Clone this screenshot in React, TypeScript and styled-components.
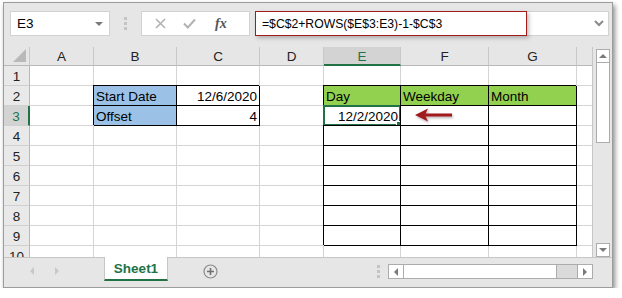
import { Fragment } from "react"
import styled, { createGlobalStyle } from "styled-components"

const GlobalStyle = createGlobalStyle`
  html, body {
    margin: 0;
    background: #ffffff;
  }
  body {
    font-family: "Liberation Sans", Arial, sans-serif;
    font-size: 13.5px;
    color: #000;
  }
`

const Window = styled.div`
  margin: 2px 0 0 3px;
  width: 610px;
  height: 286px;
  box-sizing: border-box;
  border: 1px solid #9c9c9c;
  box-shadow: 2px 3px 5px rgba(0, 0, 0, 0.45);
  background: #e6e6e6;
  display: flex;
  flex-direction: column;
  overflow: hidden;
`

const FormulaBar = styled.div`
  height: 44px;
  flex: none;
  display: flex;
  align-items: flex-start;
  padding: 8px 3px 0 6px;
  box-sizing: border-box;
`

const NameBox = styled.div`
  width: 100px;
  height: 25px;
  box-sizing: border-box;
  background: #fff;
  border: 1px solid #d2d2d2;
  display: flex;
  align-items: center;
  justify-content: space-between;
  padding: 0 6px 0 6px;
`

const DownTriangle = styled.span`
  width: 0;
  height: 0;
  border-left: 4px solid transparent;
  border-right: 4px solid transparent;
  border-top: 4px solid #7a7a7a;
`

const Grip = styled.div<{ $h?: number; $top?: number }>`
  width: ${p => (p.$h ? "auto" : "31px")};
  height: ${p => p.$h || 25}px;
  margin-top: ${p => p.$top || 0}px;
  display: flex;
  align-items: center;
  justify-content: center;
`

const FxBox = styled.div`
  width: 109px;
  height: 25px;
  box-sizing: border-box;
  background: #fff;
  border: 1px solid #d2d2d2;
  display: flex;
  align-items: center;
  padding-left: 13px;
  gap: 17px;
`

const FxLabel = styled.span`
  font-family: "Liberation Serif", "Times New Roman", serif;
  font-style: italic;
  font-weight: bold;
  font-size: 14px;
  color: #555;
  margin-left: 2px;
`

const FormulaField = styled.div`
  flex: 1;
  margin-left: 5px;
  height: 25px;
  box-sizing: border-box;
  background: #fff;
  border: 1px solid #d2d2d2;
  display: flex;
  align-items: stretch;
`

const ActiveInput = styled.div`
  width: 272px;
  margin: -1px 0 -1px -1px;
  box-sizing: border-box;
  border: 1px solid #a11d1d;
  box-shadow: 2px 2px 4px rgba(0, 0, 0, 0.25);
  display: flex;
  align-items: center;
  padding-left: 6px;
  font-size: 12.2px;
  white-space: nowrap;
`

const FieldEnd = styled.div`
  flex: 1;
  display: flex;
  align-items: center;
  justify-content: flex-end;
  padding-right: 4px;
`

const Body = styled.div`
  height: 210px;
  flex: none;
  display: flex;
`

const Sheet = styled.div`
  display: grid;
  grid-template-columns: 26px 64px 83px 83px 64px 77px 88px 88px 16px;
  grid-template-rows: 19px;
  grid-auto-rows: 20px;
  width: 589px;
  height: 210px;
  overflow: hidden;
  background: #fff;
  border-right: 1px solid #c6c6c6;
  box-sizing: border-box;
`

const ColHead = styled.div<{ $active?: boolean }>`
  box-sizing: border-box;
  background: ${p => (p.$active ? "#d3d3d3" : "#e6e6e6")};
  color: ${p => (p.$active ? "#217346" : "#222")};
  border-right: 1px solid #c8c8c8;
  border-bottom: ${p => (p.$active ? "2px solid #217346" : "1px solid #b8b8b8")};
  display: flex;
  align-items: center;
  justify-content: center;
  padding-top: 1px;
`

const Corner = styled.div`
  box-sizing: border-box;
  background: #e6e6e6;
  border-right: 1px solid #c8c8c8;
  border-bottom: 1px solid #b8b8b8;
  position: relative;

  &::after {
    content: "";
    position: absolute;
    right: 3px;
    bottom: 3px;
    width: 0;
    height: 0;
    border-left: 13px solid transparent;
    border-bottom: 13px solid #b9b9b9;
  }
`

const RowHead = styled.div<{ $active?: boolean }>`
  box-sizing: border-box;
  background: ${p => (p.$active ? "#d3d3d3" : "#e9e9e9")};
  color: ${p => (p.$active ? "#217346" : "#222")};
  border-right: ${p => (p.$active ? "2px solid #217346" : "1px solid #b8b8b8")};
  border-bottom: 1px solid #d0d0d0;
  display: flex;
  align-items: center;
  justify-content: center;
  padding-top: 1px;
`

const Cell = styled.div<{ $fill?: string; $right?: boolean; $box?: boolean }>`
  box-sizing: border-box;
  position: relative;
  background: ${p => p.$fill || "#fff"};
  border-right: 1px solid ${p => (p.$box ? "#000" : "#d4d4d4")};
  border-bottom: 1px solid ${p => (p.$box ? "#000" : "#d4d4d4")};
  box-shadow: ${p => (p.$box ? "-1px -1px 0 0 #000" : "none")};
  display: flex;
  align-items: flex-end;
  justify-content: ${p => (p.$right ? "flex-end" : "flex-start")};
  padding: 0 2px 1px 2px;
  white-space: nowrap;
  overflow: visible;
`

const Selection = styled.div`
  position: absolute;
  left: -1px;
  top: -1px;
  right: -1px;
  bottom: -1px;
  border: 2px solid #217346;
  pointer-events: none;

  &::after {
    content: "";
    position: absolute;
    right: -4px;
    bottom: -4px;
    width: 5px;
    height: 5px;
    background: #217346;
    border: 1px solid #fff;
  }
`

const ArrowWrap = styled.div`
  align-self: center;
  margin: 2px 0 0 12px;
  display: flex;
`

const VScroll = styled.div`
  width: 19px;
  flex: none;
  display: flex;
  flex-direction: column;
  padding: 2px 2px 0 3px;
  box-sizing: border-box;
`

const ScrollButton = styled.div`
  width: 14px;
  height: 14px;
  box-sizing: border-box;
  background: #fff;
  border: 1px solid #acacac;
  display: flex;
  align-items: center;
  justify-content: center;
  flex: none;
`

const VThumb = styled.div`
  height: 80px;
  width: 14px;
  box-sizing: border-box;
  background: #fff;
  border: 1px solid #acacac;
  border-top: none;
`

const Spacer = styled.div`
  flex: 1;
`

const TabBar = styled.div`
  flex: 1;
  display: flex;
  align-items: flex-start;
  border-top: 1px solid #c6c6c6;
`

const SheetNav = styled.div`
  width: 100px;
  height: 26px;
  display: flex;
  align-items: center;
  padding-left: 26px;
  gap: 21px;
  box-sizing: border-box;
`

const Tab = styled.div`
  width: 64px;
  height: 24px;
  margin-top: -1px;
  box-sizing: border-box;
  background: #fff;
  border-left: 1px solid #c6c6c6;
  border-right: 1px solid #c6c6c6;
  border-bottom: 2px solid #217346;
  color: #217346;
  font-weight: bold;
  display: flex;
  align-items: center;
  justify-content: center;
  padding-top: 1px;
`

const AddSheet = styled.div`
  margin: 6px 0 0 35px;
  display: flex;
`

const HScroll = styled.div`
  width: 205px;
  height: 15px;
  margin: 6px 19px 0 8px;
  box-sizing: border-box;
  border: 1px solid #acacac;
  background: #dadada;
  display: flex;
`

const HButton = styled.div<{ $side: "left" | "right" }>`
  width: 14px;
  background: #fff;
  ${p => (p.$side === "left" ? "border-right: 1px solid #acacac;" : "border-left: 1px solid #acacac;")}
  display: flex;
  align-items: center;
  justify-content: center;
`

const HThumb = styled.div`
  width: 152px;
  background: #fff;
  border-right: 1px solid #acacac;
`

const HTrack = styled.div`
  flex: 1;
`

const Dots = ({ color = "#b4b4b4" }: { color?: string }) => (
  <svg width="3" height="13" viewBox="0 0 3 13">
    <rect x="0" y="0" width="3" height="3" fill={color} />
    <rect x="0" y="5" width="3" height="3" fill={color} />
    <rect x="0" y="10" width="3" height="3" fill={color} />
  </svg>
)

const Tri = ({ dir, color = "#7a7a7a", size = 4 }: { dir: "up" | "down" | "left" | "right"; color?: string; size?: number }) => {
  const s = size
  const pts = {
    up: `0,${s} ${s},0 ${2 * s},${s}`,
    down: `0,0 ${2 * s},0 ${s},${s}`,
    left: `${s},0 ${s},${2 * s} 0,${s}`,
    right: `0,0 0,${2 * s} ${s},${s}`,
  }[dir]
  const w = dir === "up" || dir === "down" ? 2 * s : s
  const h = dir === "up" || dir === "down" ? s : 2 * s
  return (
    <svg width={w} height={h} viewBox={`0 0 ${w} ${h}`}>
      <polygon points={pts} fill={color} />
    </svg>
  )
}

const RedArrow = () => (
  <svg width="40" height="18" viewBox="0 0 40 18">
    <defs>
      <filter id="sh" x="-20%" y="-40%" width="140%" height="180%">
        <feDropShadow dx="1" dy="1.5" stdDeviation="1" floodColor="#000" floodOpacity="0.3" />
      </filter>
    </defs>
    <g filter="url(#sh)" fill="#a01b1f">
      <rect x="9" y="6.5" width="28" height="3" />
      <polygon points="0,8 13,1.5 10,8 13,14.5" />
    </g>
  </svg>
)

const columns = ["A", "B", "C", "D", "E", "F", "G", ""]

type CellData = { text?: string; fill?: string; right?: boolean; box?: boolean; selected?: boolean; arrow?: boolean }

const BLUE = "#9bc2e6"
const GREEN = "#92d050"

const sheet: Record<number, Record<string, CellData>> = {
  2: {
    B: { text: "Start Date", fill: BLUE, box: true },
    C: { text: "12/6/2020", right: true, box: true },
    E: { text: "Day", fill: GREEN, box: true },
    F: { text: "Weekday", fill: GREEN, box: true },
    G: { text: "Month", fill: GREEN, box: true },
  },
  3: {
    B: { text: "Offset", fill: BLUE, box: true },
    C: { text: "4", right: true, box: true },
    E: { text: "12/2/2020", right: true, box: true, selected: true },
    F: { box: true, arrow: true },
    G: { box: true },
  },
}

// empty bordered rows of the result table
for (let r = 4; r <= 9; r++) {
  sheet[r] = { E: { box: true }, F: { box: true }, G: { box: true } }
}

const rows = Array.from({ length: 10 }, (_, i) => i + 1)

export default function App() {
  return (
    <Fragment>
      <GlobalStyle />
      <Window>
        <FormulaBar>
          <NameBox>
            <span>E3</span>
            <DownTriangle />
          </NameBox>
          <Grip>
            <Dots color="#c4c4c4" />
          </Grip>
          <FxBox>
            <svg width="11" height="11" viewBox="0 0 11 11">
              <path d="M1 1 L10 10 M10 1 L1 10" stroke="#b2b2b2" strokeWidth="1.6" />
            </svg>
            <svg width="13" height="11" viewBox="0 0 13 11">
              <path d="M1 5.5 L4.8 9.5 L12 1.5" stroke="#b2b2b2" strokeWidth="2" fill="none" />
            </svg>
            <FxLabel>fx</FxLabel>
          </FxBox>
          <FormulaField>
            <ActiveInput>=$C$2+ROWS($E$3:E3)-1-$C$3</ActiveInput>
            <FieldEnd>
              <svg width="10" height="7" viewBox="0 0 10 7">
                <path d="M1 1 L5 5 L9 1" stroke="#8a8a8a" strokeWidth="2" fill="none" />
              </svg>
            </FieldEnd>
          </FormulaField>
        </FormulaBar>

        <Body>
          <Sheet>
            <Corner />
            {columns.map((c, i) => (
              <ColHead key={"h" + i} $active={c === "E"}>
                {c}
              </ColHead>
            ))}
            {rows.map(r => (
              <Fragment key={r}>
                <RowHead $active={r === 3}>{r}</RowHead>
                {columns.map((c, i) => {
                  const d = (sheet[r] && sheet[r][c]) || {}
                  return (
                    <Cell key={r + "-" + i} $fill={d.fill} $right={d.right} $box={d.box}>
                      {d.text}
                      {d.arrow && (
                        <ArrowWrap>
                          <RedArrow />
                        </ArrowWrap>
                      )}
                      {d.selected && <Selection />}
                    </Cell>
                  )
                })}
              </Fragment>
            ))}
          </Sheet>
          <VScroll>
            <ScrollButton>
              <Tri dir="up" />
            </ScrollButton>
            <VThumb />
            <Spacer />
            <ScrollButton>
              <Tri dir="down" />
            </ScrollButton>
          </VScroll>
        </Body>

        <TabBar>
          <SheetNav>
            <Tri dir="left" color="#c8c8c8" />
            <Tri dir="right" color="#c8c8c8" />
          </SheetNav>
          <Tab>Sheet1</Tab>
          <AddSheet>
            <svg width="15" height="15" viewBox="0 0 15 15">
              <circle cx="7.5" cy="7.5" r="6.5" fill="none" stroke="#8a8a8a" strokeWidth="1.2" />
              <path d="M7.5 4 V11 M4 7.5 H11" stroke="#6f6f6f" strokeWidth="1.6" />
            </svg>
          </AddSheet>
          <Spacer />
          <Grip $h={15} $top={6}>
            <Dots color="#c4c4c4" />
          </Grip>
          <HScroll>
            <HButton $side="left">
              <Tri dir="left" />
            </HButton>
            <HThumb />
            <HTrack />
            <HButton $side="right">
              <Tri dir="right" />
            </HButton>
          </HScroll>
        </TabBar>
      </Window>
    </Fragment>
  )
}
